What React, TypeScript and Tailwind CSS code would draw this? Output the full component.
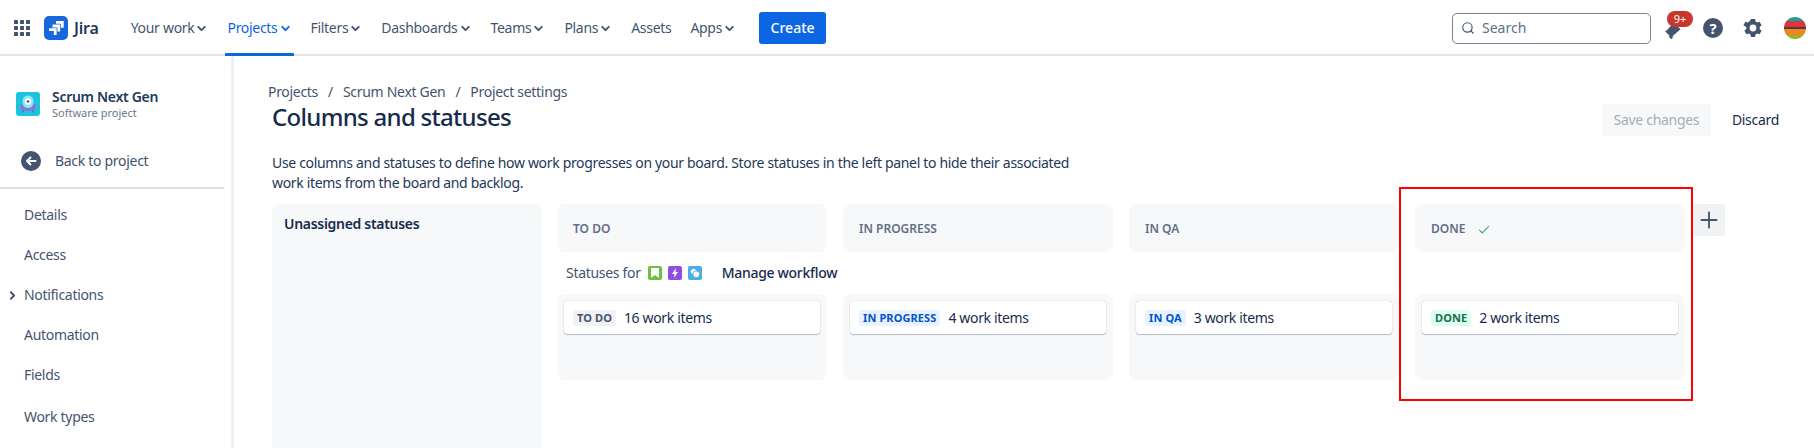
import { ChevronDown, ChevronRight, Check, Plus, Search } from 'lucide-react'

const navItems = [
  { label: 'Your work', chevron: true },
  { label: 'Projects', chevron: true, active: true },
  { label: 'Filters', chevron: true },
  { label: 'Dashboards', chevron: true },
  { label: 'Teams', chevron: true },
  { label: 'Plans', chevron: true },
  { label: 'Assets', chevron: false },
  { label: 'Apps', chevron: true },
]

const sideItems = ['Details', 'Access', 'Notifications', 'Automation', 'Fields', 'Work types']

function GridIcon() {
  return (
    <svg width="16" height="16" viewBox="0 0 16 16" fill="#44546f">
      {[0, 6, 12].map((y) =>
        [0, 6, 12].map((x) => <rect key={`${x}-${y}`} x={x} y={y} width="4" height="4" rx="0.5" />),
      )}
    </svg>
  )
}

function JiraLogo() {
  return (
    <svg width="24" height="24" viewBox="0 0 24 24">
      <rect width="24" height="24" rx="5" fill="#1868db" />
      <g fill="none" stroke="#fff" strokeWidth="2.8">
        <path d="M5 13.600h6.200v5.400" />
        <path d="M8.500 10h6.300v5.400" />
        <path d="M12 6.400h6.300v5.400" />
      </g>
    </svg>
  )
}

function ProjectIcon() {
  return (
    <svg width="24" height="24" viewBox="0 0 24 24">
      <rect width="24" height="24" rx="3" fill="#1fc4dc" />
      <ellipse cx="12" cy="14.500" rx="8" ry="4.500" fill="#8777d9" />
      <rect x="6.500" y="3.500" width="11" height="12.500" rx="5.500" fill="#8ce8f5" />
      <circle cx="12" cy="9.500" r="3.200" fill="#fff" />
      <circle cx="12" cy="9.500" r="1.300" fill="#5243aa" />
      <path d="M7 18v2.500M17 18v2.500" stroke="#5e4db2" strokeWidth="1" />
    </svg>
  )
}

function GearIcon() {
  return (
    <svg width="20" height="20" viewBox="0 0 20 20" fill="#44546f">
      <path
        fillRule="evenodd"
        d="M8 1h4l.6 2.600 1.500.9 2.500-.8 2 3.500-1.900 1.800v2l1.900 1.800-2 3.500-2.500-.8-1.500.9L12 19H8l-.6-2.600-1.500-.9-2.500.8-2-3.500 1.900-1.800V9L.4 7.200l2-3.500 2.500.8 1.500-.9zM10 6.600a3.400 3.400 0 1 0 0 6.800 3.400 3.400 0 0 0 0-6.800z"
      />
    </svg>
  )
}

function Lozenge({ text, className }: { text: string; className: string }) {
  return (
    <span className={`h-4 px-1 rounded-[3px] flex items-center text-[11px] leading-none font-bold tracking-[0.1px] ${className}`}>
      {text}
    </span>
  )
}

function Column({ title, done }: { title: string; done?: boolean }) {
  return (
    <div className="h-12 w-[270px] shrink-0 rounded-lg bg-[#f7f8f9] pl-4 pt-[1px] flex items-center gap-3 text-xs font-semibold text-[#626f86]">
      {title}
      {done && <Check size={14} strokeWidth={1.75} className="text-[#22a06b] mt-0.5" />}
    </div>
  )
}

function StatusCard({ lozenge, count }: { lozenge: React.ReactNode; count: string }) {
  return (
    <div className="h-[86px] w-[270px] shrink-0 rounded-lg bg-[#f7f8f9] pt-[7px] px-[7px]">
      <div className="h-[33px] rounded-[3px] bg-white shadow-[0_1px_1px_#091e4240,0_0_1px_#091e424f] pl-[9px] flex items-center gap-[8px] text-sm text-[#172b4d] tracking-[-0.35px]">
        {lozenge}
        <span>{count}</span>
      </div>
    </div>
  )
}

export default function App() {
  return (
    <div className="relative w-[1814px] h-[448px] overflow-hidden bg-white font-['Noto_Sans',sans-serif] text-[#172b4d]">
      <header className="h-[56px] border-b-2 border-[#e4e5e8] flex items-center pt-[2px] pl-[14px] pr-[8px]">
        <GridIcon />
        <div className="ml-[14px] flex items-center gap-[6px]">
          <JiraLogo />
          <span className="text-base font-semibold text-[#253858] tracking-[-0.2px]">Jira</span>
        </div>
        <nav className="ml-[30px] flex items-center h-full gap-[15px]">
          {navItems.map((item) => (
            <div
              key={item.label}
              className={`relative h-full flex items-center px-[2px] text-sm tracking-[-0.3px] ${item.active ? 'text-[#0c66e4]' : 'text-[#44546f]'}`}
            >
              {item.label}
              {item.chevron && <ChevronDown size={13} strokeWidth={3.5} className="ml-[1px] mt-[1px]" />}
              {item.active && <span className="absolute left-0 right-0 bottom-[-2px] h-[3px] rounded-t-[1px] bg-[#0c66e4]" />}
            </div>
          ))}
          <button className="ml-[6px] h-8 w-[67px] rounded-[3px] bg-[#0c66e4] text-white text-sm font-medium">Create</button>
        </nav>
        <div className="ml-auto flex items-center">
          <div className="h-[31px] w-[199px] rounded-[5px] border border-[#738496] flex items-center pl-[8px] gap-[7px] text-sm text-[#626f86]">
            <Search size={14} strokeWidth={2} className="text-[#44546f]" />
            Search
          </div>
          <div className="relative ml-[12px] w-8 h-8 flex items-center justify-center">
            <svg width="20" height="20" viewBox="0 0 24 24" fill="#44546f" className="mt-1 -ml-3">
              <path d="M13 3 5 12l-2.500 1.500 8 8L12 19l9-8z" />
              <path d="M7 20l3 3 2-2-3-3z" />
            </svg>
            <span className="absolute left-[4px] top-[-1px] h-4 w-[26px] rounded-lg bg-[#c9372c] text-white text-[11px] leading-4 text-center">9+</span>
          </div>
          <div className="ml-[8px] w-5 h-5 rounded-full bg-[#44546f] text-white flex items-center justify-center text-[15px] font-bold leading-none">?</div>
          <div className="ml-[20px]"><GearIcon /></div>
          <svg width="22" height="22" viewBox="0 0 22 22" className="ml-[21px]">
            <defs>
              <clipPath id="avatar-clip">
                <circle cx="11" cy="11" r="11" />
              </clipPath>
            </defs>
            <g clipPath="url(#avatar-clip)">
              <rect width="22" height="5" fill="#1aa39a" />
              <rect y="4" width="22" height="6" fill="#e2313f" />
              <rect y="10" width="22" height="2" fill="#44403c" />
              <rect y="12" width="22" height="6" fill="#f58220" />
              <rect y="18" width="22" height="4" fill="#8cb82b" />
            </g>
          </svg>
        </div>
      </header>

      <div className="flex h-[392px]">
        <aside className="w-[234px] shrink-0 border-r-[3px] border-[#eeeff1]">
          <div className="pl-4 pt-[32px] flex items-center gap-3">
            <ProjectIcon />
            <div>
              <div className="text-sm font-semibold leading-[18px] tracking-[-0.3px] text-[#253858]">Scrum Next Gen</div>
              <div className="text-[11px] leading-[14px] text-[#6b778c]">Software project</div>
            </div>
          </div>
          <div className="w-[224px] mt-[31px] h-[38px] border-b-2 border-[#dfe1e6] pl-[21px] flex items-start gap-[14px] text-sm text-[#44546f] tracking-[-0.3px]">
            <div className="w-5 h-5 rounded-full bg-[#44546f] flex items-center justify-center">
              <svg width="12" height="12" viewBox="0 0 12 12" fill="none" stroke="#fff" strokeWidth="2" strokeLinecap="round" strokeLinejoin="round">
                <path d="M10.500 6H2M5.500 2.500 2 6l3.500 3.500" />
              </svg>
            </div>
            <span className="leading-5">Back to project</span>
          </div>
          <ul className="mt-[6px] text-sm text-[#44546f] tracking-[-0.3px]">
            {sideItems.map((item) => (
              <li key={item} className={`relative pl-6 flex items-center ${item === 'Work types' ? 'h-11' : 'h-10'}`}>
                {item === 'Notifications' && (
                  <ChevronRight size={13} strokeWidth={3.5} className="absolute left-[6px] top-[14px]" />
                )}
                {item}
              </li>
            ))}
          </ul>
        </aside>

        <main className="flex-1 min-w-0 pl-[34px] pt-[27px]">
          <div className="h-[18px] flex items-center gap-[10px] text-sm text-[#44546f] tracking-[-0.3px]">
            <span>Projects</span>
            <span>/</span>
            <span>Scrum Next Gen</span>
            <span>/</span>
            <span>Project settings</span>
          </div>
          <div className="flex items-start pl-1 pr-[35px]">
            <h1 className="text-2xl font-medium leading-[32px] tracking-[-0.7px]">Columns and statuses</h1>
            <button className="ml-auto mt-[3px] h-8 w-[109px] rounded-[3px] bg-[#f7f8f9] text-sm text-[#a5adba] tracking-[-0.3px]">Save changes</button>
            <span className="ml-[21px] mt-[3px] leading-8 text-sm tracking-[-0.3px]">Discard</span>
          </div>
          <p className="mt-[17px] pl-1 w-[815px] text-sm leading-5 tracking-[-0.33px] text-[#253858]">
            Use columns and statuses to define how work progresses on your board. Store statuses in the left panel to hide their associated work items from the board and backlog.
          </p>
          <div className="mt-[11px] pl-1 flex items-start gap-[15px]">
            <div className="w-[270px] h-[260px] shrink-0 rounded-lg bg-[#f7f8f9] pl-3 pt-[10px] text-sm font-semibold leading-5 tracking-[-0.3px]">
              Unassigned statuses
            </div>
            <div>
              <div className="flex gap-4">
                <Column title="TO DO" />
                <Column title="IN PROGRESS" />
                <Column title="IN QA" />
                <Column title="DONE" done />
                <div className="-ml-2 w-8 h-8 rounded-[3px] bg-[#f1f2f4] flex items-center justify-center">
                  <Plus size={26} strokeWidth={1.75} className="text-[#44546f]" />
                </div>
              </div>
              <div className="h-[42px] pl-[9px] flex items-center text-sm tracking-[-0.3px]">
                <span className="text-[#44546f]">Statuses for</span>
                <span className="ml-[7px] w-3.5 h-3.5 rounded-[2px] bg-[#6cc13f] flex items-center justify-center">
                  <svg width="8" height="10" viewBox="0 0 8 10" fill="#fff"><path d="M0 0h8v10L4 7l-4 3z" /></svg>
                </span>
                <span className="ml-[6px] w-3.5 h-3.5 rounded-[2px] bg-[#8f4fe0] flex items-center justify-center">
                  <svg width="8" height="10" viewBox="0 0 8 10" fill="#fff"><path d="M5 0 1 6h2.500L3 10l4-6H4.500z" /></svg>
                </span>
                <span className="ml-[6px] w-3.5 h-3.5 rounded-[2px] bg-[#4bade8] flex items-center justify-center">
                  <svg width="10" height="10" viewBox="0 0 10 10" fill="#fff" stroke="#4bade8" strokeWidth="0.8"><circle cx="3.500" cy="3.500" r="3" /><circle cx="6.300" cy="6.300" r="3.300" /></svg>
                </span>
                <span className="ml-[20px] font-medium">Manage workflow</span>
              </div>
              <div className="flex gap-4">
                <StatusCard count="16 work items" lozenge={<Lozenge text="TO DO" className="bg-[#f1f2f4] text-[#44546f]" />} />
                <StatusCard count="4 work items" lozenge={<Lozenge text="IN PROGRESS" className="bg-[#e9f2ff] text-[#0055cc]" />} />
                <StatusCard count="3 work items" lozenge={<Lozenge text="IN QA" className="bg-[#e9f2ff] text-[#0055cc]" />} />
                <StatusCard count="2 work items" lozenge={<Lozenge text="DONE" className="bg-[#dcfff1] text-[#216e4e]" />} />
              </div>
            </div>
          </div>
        </main>
      </div>

      {/* annotation box */}
      <div className="absolute left-[1399px] top-[187px] w-[294px] h-[214px] border-2 border-[#ff0000]" />
    </div>
  )
}
